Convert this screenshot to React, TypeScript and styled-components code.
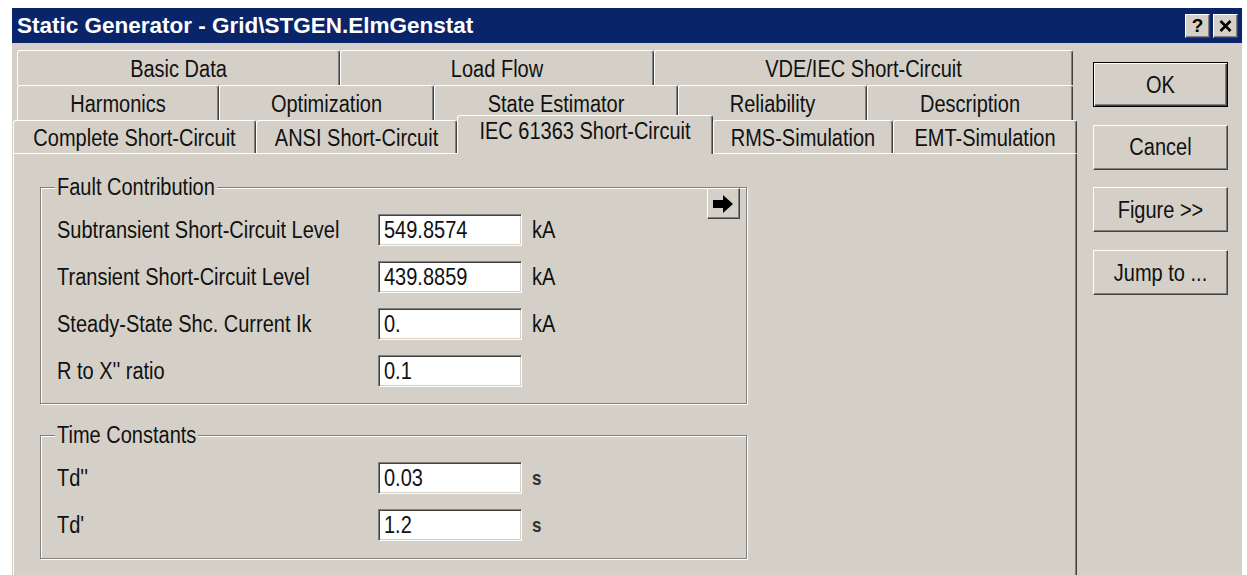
import React from "react";
import styled, { createGlobalStyle } from "styled-components";

const UI_FONT = `"Liberation Sans", Arial, sans-serif`;
const UI_SIZE = "20px";
const FACE = "#d4d0c8";

const GlobalStyle = createGlobalStyle`
  html, body { margin: 0; padding: 0; background: #ffffff; overflow: hidden; }
  #root { width: 1247px; height: 575px; overflow: hidden; }
  *, *::before, *::after { box-sizing: border-box; }
`;

/* Text of the old dialog font is taller than it is wide: stretch it a little. */
const Txt = styled.span`
  display: inline-block;
  transform: scaleY(1.16);
  transform-origin: 50% 55%;
  white-space: nowrap;
`;

const Window = styled.div`
  margin: 8px 0 0 12px;
  width: 1230px;
  height: 567px;
  background: ${FACE};
  display: flex;
  flex-direction: column;
  font-family: ${UI_FONT};
  font-size: ${UI_SIZE};
  color: #111;
`;

const TitleBar = styled.div`
  height: 35px;
  flex: none;
  background: #0a246a;
  display: flex;
  align-items: center;
  padding: 0 4px 0 5px;
`;

const TitleText = styled.div`
  flex: 1;
  color: #ffffff;
  font-family: "Liberation Sans", Arial, sans-serif;
  font-weight: bold;
  font-size: 22.5px;
  white-space: nowrap;
  padding-top: 1px;
`;

const TitleButtons = styled.div`
  display: flex;
  gap: 3px;
`;

const CaptionButton = styled.div`
  width: 25px;
  height: 24px;
  background: ${FACE};
  border: 1px solid;
  border-color: #ffffff #404040 #404040 #ffffff;
  box-shadow: inset -1px -1px 0 #808080;
  display: flex;
  align-items: center;
  justify-content: center;
  font-family: "Liberation Sans", Arial, sans-serif;
  font-weight: bold;
  font-size: 19px;
  line-height: 1;
  color: #000;
`;

const Body = styled.div`
  flex: 1;
  display: flex;
  gap: 16px;
  padding: 7px 0 0 1px;
  min-height: 0;
`;

const LeftColumn = styled.div`
  width: 1064px;
  display: flex;
  flex-direction: column;
`;

const TabStrip = styled.div`
  display: flex;
  flex-direction: column;
`;

const TabRow = styled.div<{ $inset: number; $h: number }>`
  display: flex;
  align-items: flex-end;
  height: ${(p) => p.$h}px;
  margin: 0 ${(p) => p.$inset}px;
`;

const Tab = styled.div<{ $w: number; $selected?: boolean }>`
  flex: none;
  width: ${(p) => p.$w}px;
  height: ${(p) => (p.$selected ? "39px" : "100%")};
  margin-bottom: ${(p) => (p.$selected ? "-1px" : "0")};
  position: ${(p) => (p.$selected ? "relative" : "static")};
  z-index: ${(p) => (p.$selected ? 1 : "auto")};
  background: ${FACE};
  border-top: 1px solid #ffffff;
  border-left: 1px solid #ffffff;
  border-right: 1px solid #404040;
  border-radius: 3px 3px 0 0;
  box-shadow: inset -1px 0 0 #808080;
  display: flex;
  align-items: center;
  justify-content: center;
  padding: ${(p) => (p.$selected ? "0 0 7px 0" : "3px 0 0 0")};
`;

const Panel = styled.div`
  flex: 1;
  border-top: 1px solid #ffffff;
  border-left: 1px solid #ffffff;
  border-right: 1px solid #404040;
  box-shadow: inset -1px 0 0 #808080;
  padding: 33px 0 0 26px;
`;

const Group = styled.div<{ $pt: number; $pb: number; $mb: number }>`
  position: relative;
  width: 707px;
  border: 1px solid #808080;
  box-shadow: inset 1px 1px 0 #ffffff, 1px 1px 0 #ffffff;
  padding: ${(p) => p.$pt}px 16px ${(p) => p.$pb}px 16px;
  margin-bottom: ${(p) => p.$mb}px;
  display: flex;
  flex-direction: column;
  gap: 15px;
`;

const Legend = styled.div`
  position: absolute;
  top: -13px;
  left: 14px;
  height: 24px;
  line-height: 24px;
  padding: 0 2px;
  background: ${FACE};
`;

const FieldRow = styled.div`
  display: grid;
  grid-template-columns: 311px 144px auto;
  column-gap: 10px;
  align-items: center;
  height: 32px;
`;

const Label = styled.div`
  padding-top: 1px;
`;

const Field = styled.div`
  width: 144px;
  height: 32px;
  background: #ffffff;
  border: 1px solid;
  border-color: #808080 #ffffff #ffffff #808080;
  box-shadow: inset 1px 1px 0 #404040, inset -1px -1px 0 ${FACE};
  padding: 0 0 0 5px;
  display: flex;
  align-items: center;
  color: #111;
`;

const Unit = styled.div`
  padding-top: 1px;
`;

const SmallUnit = styled(Unit)`
  font-size: 17px;
  font-weight: bold;
  color: #333;
`;

const ArrowButton = styled.div`
  position: absolute;
  top: 0;
  right: 6px;
  width: 33px;
  height: 31px;
  background: ${FACE};
  border: 1px solid;
  border-color: #ffffff #404040 #404040 #ffffff;
  box-shadow: inset -1px -1px 0 #808080;
  display: flex;
  align-items: center;
  justify-content: center;
`;

const ButtonColumn = styled.div`
  width: 135px;
  margin-top: 12px;
  display: flex;
  flex-direction: column;
  gap: 17.7px;
`;

const DialogButton = styled.div<{ $default?: boolean }>`
  height: 45px;
  background: ${FACE};
  border: 1px solid;
  border-color: ${(p) =>
    p.$default ? "#000000" : "#ffffff #404040 #404040 #ffffff"};
  box-shadow: ${(p) =>
    p.$default
      ? "inset 1px 1px 0 #ffffff, inset -1px -1px 0 #404040, inset -2px -2px 0 #808080"
      : "inset -1px -1px 0 #808080"};
  display: flex;
  align-items: center;
  justify-content: center;
  padding-top: 1px;
`;

type TabDef = { label: string; w: number; selected?: boolean };

const rows: { inset: number; h: number; tabs: TabDef[] }[] = [
  {
    inset: 4,
    h: 35,
    tabs: [
      { label: "Basic Data", w: 323 },
      { label: "Load Flow", w: 314 },
      { label: "VDE/IEC Short-Circuit", w: 419 },
    ],
  },
  {
    inset: 4,
    h: 35,
    tabs: [
      { label: "Harmonics", w: 202 },
      { label: "Optimization", w: 215 },
      { label: "State Estimator", w: 244 },
      { label: "Reliability", w: 189 },
      { label: "Description", w: 206 },
    ],
  },
  {
    inset: 0,
    h: 33,
    tabs: [
      { label: "Complete Short-Circuit", w: 243 },
      { label: "ANSI Short-Circuit", w: 201 },
      { label: "IEC 61363 Short-Circuit", w: 256, selected: true },
      { label: "RMS-Simulation", w: 180 },
      { label: "EMT-Simulation", w: 184 },
    ],
  },
];

const faultRows = [
  { label: "Subtransient Short-Circuit Level", value: "549.8574", unit: "kA" },
  { label: "Transient Short-Circuit Level", value: "439.8859", unit: "kA" },
  { label: "Steady-State Shc. Current Ik", value: "0.", unit: "kA" },
  { label: "R to X'' ratio", value: "0.1", unit: "" },
];

const timeRows = [
  { label: "Td''", value: "0.03", unit: "s" },
  { label: "Td'", value: "1.2", unit: "s" },
];

const CloseIcon = () => (
  <svg width="13" height="12" viewBox="0 0 13 12">
    <path d="M1.5 1 L11.5 11 M11.5 1 L1.5 11" stroke="#000" strokeWidth="2.6" />
  </svg>
);

const RightArrow = () => (
  <svg width="21" height="18" viewBox="0 0 21 18">
    <polygon points="0,5 10,5 10,0 20,9 10,18 10,13 0,13" fill="#000" />
  </svg>
);

export default function App() {
  return (
    <>
      <GlobalStyle />
      <Window>
        <TitleBar>
          <TitleText>Static Generator - Grid\STGEN.ElmGenstat</TitleText>
          <TitleButtons>
            <CaptionButton>?</CaptionButton>
            <CaptionButton>
              <CloseIcon />
            </CaptionButton>
          </TitleButtons>
        </TitleBar>
        <Body>
          <LeftColumn>
            <TabStrip>
              {rows.map((row, i) => (
                <TabRow key={i} $inset={row.inset} $h={row.h}>
                  {row.tabs.map((t) => (
                    <Tab key={t.label} $w={t.w} $selected={t.selected}>
                      <Txt>{t.label}</Txt>
                    </Tab>
                  ))}
                </TabRow>
              ))}
            </TabStrip>
            <Panel>
              <Group $pt={26} $pb={16} $mb={31}>
                <Legend>
                  <Txt>Fault Contribution</Txt>
                </Legend>
                <ArrowButton>
                  <RightArrow />
                </ArrowButton>
                {faultRows.map((r) => (
                  <FieldRow key={r.label}>
                    <Label>
                      <Txt>{r.label}</Txt>
                    </Label>
                    <Field role="textbox">
                      <Txt>{r.value}</Txt>
                    </Field>
                    <Unit>
                      <Txt>{r.unit}</Txt>
                    </Unit>
                  </FieldRow>
                ))}
              </Group>
              <Group $pt={26} $pb={17} $mb={0}>
                <Legend>
                  <Txt>Time Constants</Txt>
                </Legend>
                {timeRows.map((r) => (
                  <FieldRow key={r.label}>
                    <Label>
                      <Txt>{r.label}</Txt>
                    </Label>
                    <Field role="textbox">
                      <Txt>{r.value}</Txt>
                    </Field>
                    <SmallUnit>
                      <Txt>{r.unit}</Txt>
                    </SmallUnit>
                  </FieldRow>
                ))}
              </Group>
            </Panel>
          </LeftColumn>
          <ButtonColumn>
            <DialogButton $default>
              <Txt>OK</Txt>
            </DialogButton>
            <DialogButton>
              <Txt>Cancel</Txt>
            </DialogButton>
            <DialogButton>
              <Txt>Figure &gt;&gt;</Txt>
            </DialogButton>
            <DialogButton>
              <Txt>Jump to ...</Txt>
            </DialogButton>
          </ButtonColumn>
        </Body>
      </Window>
    </>
  );
}
